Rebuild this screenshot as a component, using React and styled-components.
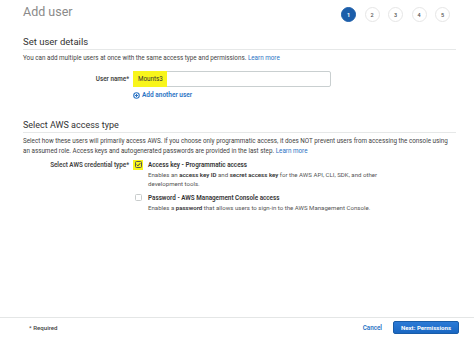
import React from 'react';
import styled, {createGlobalStyle} from 'styled-components';

const GlobalStyle = createGlobalStyle`
  html, body {
    margin: 0;
    padding: 0;
    background: #fff;
  }
  body {
    font-family: Roboto, "Liberation Sans", Arial, sans-serif;
    color: #444;
  }
`;

const Page = styled.div`
  width: 474px;
  height: 338px;
  display: flex;
  flex-direction: column;
  overflow: hidden;
`;

const Main = styled.div`
  flex: 1;
  padding: 0 18px 0 23px;
`;

const Header = styled.div`
  display: flex;
  justify-content: space-between;
  align-items: flex-start;
  height: 30px;
`;

const Title = styled.h1`
  margin: 4px 0 0;
  font-size: 12.5px;
  line-height: 15px;
  font-weight: 400;
  color: #8a8a8a;
`;

const Steps = styled.div`
  display: flex;
  gap: 8.5px;
  margin: 7px 6px 0 0;
`;

const Step = styled.div`
  width: 15px;
  height: 15px;
  box-sizing: border-box;
  border-radius: 50%;
  display: flex;
  align-items: center;
  justify-content: center;
  font-size: 5.5px;
  font-weight: ${p => (p.$active ? 700 : 500)};
  color: ${p => (p.$active ? '#fff' : '#555')};
  background: ${p => (p.$active ? '#1c5eaa' : '#fff')};
  border: 1px solid ${p => (p.$active ? '#1c5eaa' : '#e6e6e6')};
`;

const SectionTitle = styled.h2`
  margin: ${p => p.$top}px 0 0;
  padding-bottom: 1px;
  font-size: ${p => p.$size}px;
  line-height: 12px;
  font-weight: 400;
  color: #333;
  border-bottom: 1px solid #e6e8e8;
`;

const Paragraph = styled.p`
  margin: 3px 0 0;
  font-size: 6.3px;
  line-height: 10px;
  color: #444;
`;

const Link = styled.a`
  font-size: inherit;
  color: #2a73c4;
  text-decoration: none;
  font-weight: ${p => (p.$bold ? 600 : 400)};
`;

const FormRow = styled.div`
  display: grid;
  grid-template-columns: 106px 1fr;
  column-gap: 4px;
  align-items: ${p => p.$align || 'center'};
  margin-top: ${p => p.$top}px;
`;

const Label = styled.div`
  text-align: right;
  font-size: 6.3px;
  line-height: 10px;
  font-weight: 600;
  color: #444;
`;

const Input = styled.div`
  width: 198px;
  height: 16px;
  box-sizing: border-box;
  border: 1px solid #c9cfd0;
  border-radius: 2px;
  display: flex;
  align-items: stretch;
`;

const Highlight = styled.span`
  display: flex;
  align-items: center;
  margin: -1px 0 -1px -1px;
  padding: 0 4px 0 5px;
  background: #f8f51c;
  font-size: 6.3px;
  color: #333;
`;

const AddUser = styled.div`
  grid-column: 2;
  display: flex;
  align-items: center;
  gap: 2px;
  font-size: 6.5px;
  line-height: 10px;
`;

const Options = styled.div`
  display: flex;
  flex-direction: column;
  gap: 4px;
`;

const Option = styled.div`
  display: grid;
  grid-template-columns: 10px 1fr;
  column-gap: 5px;
  align-items: start;
`;

const BoxWrap = styled.div`
  width: 10px;
  height: 10px;
  display: flex;
  align-items: center;
  justify-content: center;
  background: ${p => (p.$marked ? '#f8f51c' : 'transparent')};
`;

const Box = styled.div`
  width: 7px;
  height: 7px;
  box-sizing: border-box;
  border: 1px solid ${p => (p.$checked ? '#555' : '#c8cccc')};
  border-radius: 1.5px;
  background: ${p => (p.$checked ? 'transparent' : '#fff')};
  display: flex;
  align-items: center;
  justify-content: center;
`;

const OptionTitle = styled.div`
  font-size: 6.3px;
  line-height: 10px;
  font-weight: 600;
  color: #333;
`;

const OptionDesc = styled.div`
  font-size: 6.1px;
  line-height: 9.6px;
  color: #555;
  max-width: 245px;

  b {
    font-weight: 600;
    color: #333;
  }
`;

const Footer = styled.div`
  display: flex;
  align-items: center;
  justify-content: space-between;
  height: 21px;
  box-sizing: border-box;
  border-top: 1px solid #e4e6e6;
  padding: 0 15px 1px 29px;
`;

const Required = styled.span`
  font-size: 6.1px;
  font-weight: 500;
  color: #444;
`;

const Actions = styled.div`
  display: flex;
  align-items: center;
  gap: 11px;
  font-size: 6.3px;
`;

const Button = styled.button`
  height: 13px;
  width: 66px;
  padding: 0;
  border: 1px solid #195ca8;
  border-radius: 2px;
  background: linear-gradient(#2b7ad6, #1a67c2);
  color: #fff;
  font-family: inherit;
  font-size: 6.1px;
  font-weight: 700;
`;

function PlusCircle() {
  return (
    <svg width="7" height="7" viewBox="0 0 14 14">
      <circle cx="7" cy="7" r="5.5" fill="none" stroke="#2a73c4" strokeWidth="2.2"/>
      <path d="M7 4v6M4 7h6" stroke="#2a73c4" strokeWidth="2"/>
    </svg>
  );
}

function Check() {
  return (
    <svg width="5" height="5" viewBox="0 0 10 10">
      <path d="M1.5 5.2l2.4 2.4L8.6 2.4" fill="none" stroke="#333" strokeWidth="2"/>
    </svg>
  );
}

export default function App() {
  return (
    <Page>
      <GlobalStyle/>
      <Main>
        <Header>
          <Title>Add user</Title>
          <Steps>
            {[1, 2, 3, 4, 5].map(n => (
              <Step key={n} $active={n === 1}>{n}</Step>
            ))}
          </Steps>
        </Header>

        <SectionTitle $top={6} $size={9.5}>Set user details</SectionTitle>
        <Paragraph>
          You can add multiple users at once with the same access type and permissions. <Link>Learn more</Link>
        </Paragraph>

        <FormRow $top={8}>
          <Label>User name*</Label>
          <Input><Highlight>Mounts3</Highlight></Input>
        </FormRow>
        <FormRow $top={3}>
          <AddUser>
            <PlusCircle/>
            <Link $bold>Add another user</Link>
          </AddUser>
        </FormRow>

        <SectionTitle $top={18.5} $size={9}>Select AWS access type</SectionTitle>
        <Paragraph>
          Select how these users will primarily access AWS. If you choose only programmatic access, it does NOT prevent users from accessing the console using
          an assumed role. Access keys and autogenerated passwords are provided in the last step. <Link>Learn more</Link>
        </Paragraph>

        <FormRow $top={4} $align="start">
          <Label>Select AWS credential type*</Label>
          <Options>
            <Option>
              <BoxWrap $marked><Box $checked><Check/></Box></BoxWrap>
              <div>
                <OptionTitle>Access key - Programmatic access</OptionTitle>
                <OptionDesc>
                  Enables an <b>access key ID</b> and <b>secret access key</b> for the AWS API, CLI, SDK, and other development tools.
                </OptionDesc>
              </div>
            </Option>
            <Option>
              <BoxWrap><Box/></BoxWrap>
              <div>
                <OptionTitle>Password - AWS Management Console access</OptionTitle>
                <OptionDesc>
                  Enables a <b>password</b> that allows users to sign-in to the AWS Management Console.
                </OptionDesc>
              </div>
            </Option>
          </Options>
        </FormRow>
      </Main>

      <Footer>
        <Required>* Required</Required>
        <Actions>
          <Link $bold>Cancel</Link>
          <Button>Next: Permissions</Button>
        </Actions>
      </Footer>
    </Page>
  );
}
